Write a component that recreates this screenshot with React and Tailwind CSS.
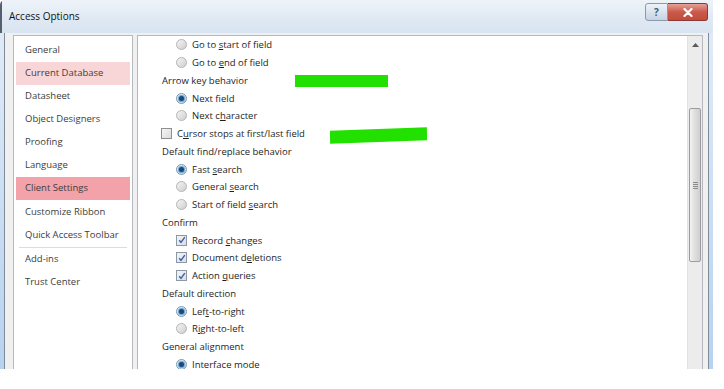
import { useState } from "react";

const navItems = [
  { label: "General" },
  { label: "Current Database", tone: "light" },
  { label: "Datasheet" },
  { label: "Object Designers" },
  { label: "Proofing" },
  { label: "Language" },
  { label: "Client Settings", tone: "strong" },
  { label: "Customize Ribbon", gapTop: true },
  { label: "Quick Access Toolbar" },
  { sep: true },
  { label: "Add-ins" },
  { label: "Trust Center" },
];

// kind: head | radio | check | topcheck ; u = index of access-key letter
const rows = [
  { kind: "radio", text: "Go to start of field", u: 6 },
  { kind: "radio", text: "Go to end of field", u: 6 },
  { kind: "head", text: "Arrow key behavior", mark: "a" },
  { kind: "radio", text: "Next field", u: 6, on: true },
  { kind: "radio", text: "Next character", u: 6 },
  { kind: "topcheck", text: "Cursor stops at first/last field", u: 1, mark: "b" },
  { kind: "head", text: "Default find/replace behavior" },
  { kind: "radio", text: "Fast search", u: 5, on: true },
  { kind: "radio", text: "General search", u: 8 },
  { kind: "radio", text: "Start of field search", u: 15 },
  { kind: "head", text: "Confirm" },
  { kind: "check", text: "Record changes", u: 7, on: true },
  { kind: "check", text: "Document deletions", u: 10, on: true },
  { kind: "check", text: "Action queries", u: 7, on: true },
  { kind: "head", text: "Default direction" },
  { kind: "radio", text: "Left-to-right", u: 3, on: true },
  { kind: "radio", text: "Right-to-left", u: 1 },
  { kind: "head", text: "General alignment" },
  { kind: "radio", text: "Interface mode", u: 5, on: true },
];

function Label({ text, u }) {
  if (u === undefined) return <span>{text}</span>;
  return (
    <span>
      {text.slice(0, u)}
      <span className="underline underline-offset-[1px]">{text[u]}</span>
      {text.slice(u + 1)}
    </span>
  );
}

function Radio({ on }) {
  return (
    <span
      className={`w-[11px] h-[11px] rounded-full border flex items-center justify-center ${
        on
          ? "border-[#7c98b4] bg-gradient-to-br from-[#eef4fa] to-[#c7d6e6]"
          : "border-[#b4b4b4] bg-gradient-to-br from-[#f4f4f4] to-[#cfcfcf]"
      }`}
    >
      {on && <span className="w-[5px] h-[5px] rounded-full bg-[#1b4a74] shadow-[0_0_1px_1px_#5d9bd0]" />}
    </span>
  );
}

function Check({ on }) {
  return (
    <span
      className={`w-[11px] h-[11px] border flex items-center justify-center ${
        on ? "border-[#8e97a4] bg-gradient-to-br from-[#f2f4f8] to-[#d9dee7]" : "border-[#8f8f8f] bg-gradient-to-br from-[#f6f6f6] to-[#dcdcdc]"
      }`}
    >
      {on && (
        <svg width="8" height="8" viewBox="0 0 8 8">
          <path d="M1.2 4.2 L3 6.4 L6.8 1.2" fill="none" stroke="#3a5fa8" strokeWidth="1.4" />
        </svg>
      )}
    </span>
  );
}

function Row({ r }) {
  return (
    <div className="h-[17.75px] flex items-center text-[#1e1e1e] leading-[13px]">
      {r.kind === "head" && <div className="pl-[24px]">{r.text}</div>}
      {r.kind === "radio" && (
        <div className="pl-[38px] flex items-center gap-[5px]">
          <Radio on={r.on} />
          <Label text={r.text} u={r.u} />
        </div>
      )}
      {r.kind === "check" && (
        <div className="pl-[38px] flex items-center gap-[5px]">
          <Check on={r.on} />
          <Label text={r.text} u={r.u} />
        </div>
      )}
      {r.kind === "topcheck" && (
        <div className="pl-[23px] flex items-center gap-[5px]">
          <Check on={r.on} />
          <Label text={r.text} u={r.u} />
        </div>
      )}
      {r.mark === "a" && <div className="ml-[47px] mt-[2px] w-[93px] h-[12px] bg-[#22e000]" />}
      {r.mark === "b" && (
        <div className="ml-[25px] mt-[4px] w-[97px] h-[13px] bg-[#22e000] -rotate-[1deg] skew-y-[-1deg]" />
      )}
    </div>
  );
}

export default function App() {
  const [active] = useState("Client Settings");

  return (
    <div className="w-[724px] h-[389px] bg-white overflow-hidden font-['Open_Sans',sans-serif] text-[9.5px]">
      <div className="w-[713px] h-[369px] flex flex-col bg-gradient-to-b from-[#e4edf7] to-[#b7d2f0] rounded-tl-[5px] overflow-hidden">
        {/* title bar */}
        <div className="h-[33px] shrink-0 flex items-start relative bg-gradient-to-b from-[#eef3f9] via-[#e1eaf4] to-[#d8e4f1] border-l-2 border-[#56606c]">
          <div className="pl-[7px] pt-[9px] text-[10px] text-[#111]">Access Options</div>
          <div className="ml-auto mr-[5px] mt-[3px] flex">
            <div className="w-[23px] h-[18px] rounded-l-[3px] border border-[#8a99ad] bg-gradient-to-b from-[#eef3f9] to-[#c5d3e4] flex items-center justify-center text-[10px] text-[#4a5a70] font-bold">
              ?
            </div>
            <div className="w-[40px] h-[18px] rounded-r-[3px] border border-l-0 border-[#8c3a33] bg-gradient-to-b from-[#e6a096] via-[#c95a4b] to-[#c24b3c] flex items-center justify-center">
              <svg width="10" height="9" viewBox="0 0 10 9">
                <path d="M1.5 1 L8.5 8 M8.5 1 L1.5 8" stroke="#fff" strokeWidth="2.2" strokeLinecap="round" />
              </svg>
            </div>
          </div>
        </div>

        {/* body */}
        <div className="flex-1 mx-[4px] border-x border-[#7f8b99] bg-[#f0f0f0] flex gap-[4px] pl-[8px] pr-[5px] pt-[2px] overflow-hidden">
          {/* nav */}
          <div className="w-[120px] h-[360px] shrink-0 bg-white border border-[#b5b9be] pt-[3px] px-[2px] text-[#3d3d3d]">
            {navItems.map((it, i) =>
              it.sep ? (
                <div key={i} className="mx-[3px] h-px bg-[#dcdcdc]" />
              ) : (
                <div
                  key={it.label}
                  className={`h-[23px] flex items-center pl-[9px] ${it.gapTop ? "mt-[1px]" : ""} ${
                    it.tone === "light" ? "bg-[#f8d6d8]" : it.label === active ? "bg-[#f3a2a9]" : ""
                  }`}
                >
                  {it.label}
                </div>
              )
            )}
          </div>

          {/* options */}
          <div className="flex-1 h-[360px] bg-white border border-[#b5b9be] flex">
            <div className="flex-1">
              {rows.map((r, i) => (
                <Row key={i} r={r} />
              ))}
            </div>
            <div className="w-[15px] bg-[#ececec] border-l border-[#e2e2e2] flex flex-col items-center">
              <div className="h-[17px] flex items-center justify-center">
                <svg width="7" height="4" viewBox="0 0 7 4">
                  <path d="M0 4 L3.5 0 L7 4 Z" fill="#5a5a5a" />
                </svg>
              </div>
              <div className="mt-[55px] w-[12px] h-[154px] rounded-[2px] border border-[#9c9c9c] bg-gradient-to-r from-[#f2f2f2] via-[#dedede] to-[#cfcfcf] flex flex-col items-center justify-center gap-[1px]">
                <div className="w-[5px] h-px bg-[#8a8a8a]" />
                <div className="w-[5px] h-px bg-[#8a8a8a]" />
                <div className="w-[5px] h-px bg-[#8a8a8a]" />
                <div className="w-[5px] h-px bg-[#8a8a8a]" />
              </div>
            </div>
          </div>
        </div>
      </div>
    </div>
  );
}
